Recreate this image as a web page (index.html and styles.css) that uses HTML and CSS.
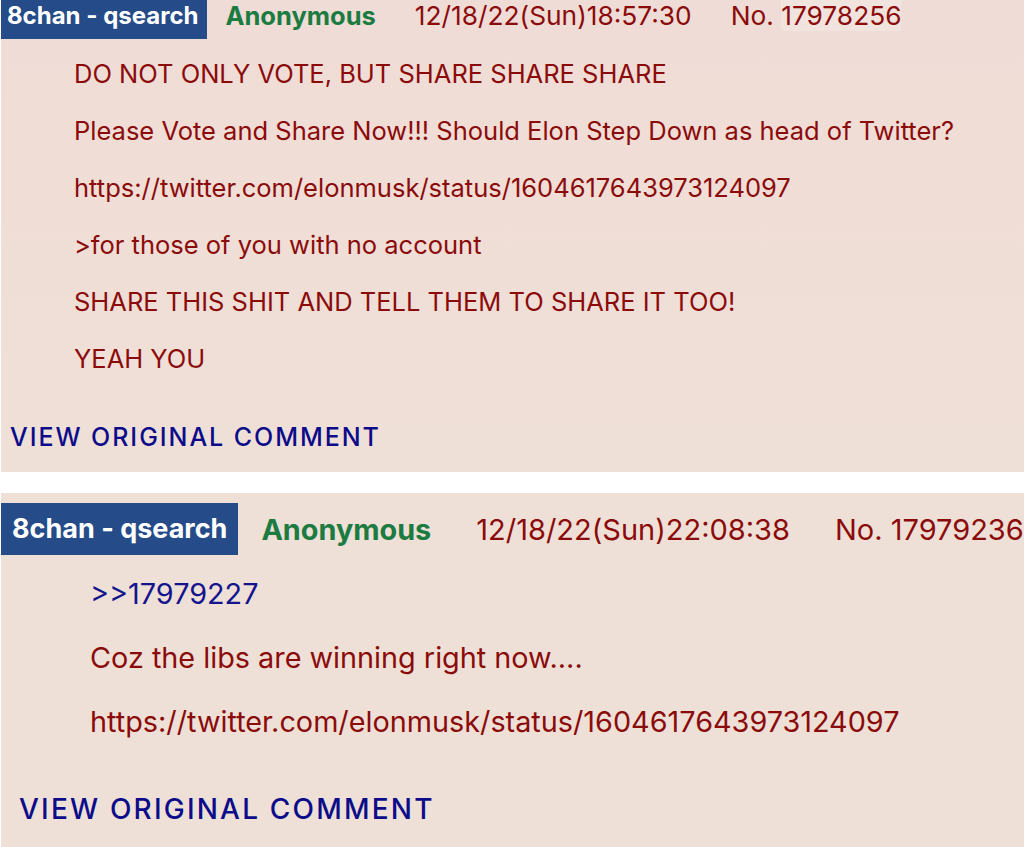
FILE: index.html
```html
<!DOCTYPE html>
<html lang="en">
<head>
<meta charset="utf-8">
<title>8chan - qsearch</title>
<link rel="stylesheet" href="styles.css">
</head>
<body>
<div class="post post-a">
  <div class="post-head">
    <span class="badge">8chan - qsearch</span>
    <span class="name">Anonymous</span>
    <span class="date">12/18/22(Sun)18:57:30</span>
    <span class="num">No. <span class="num-id">17978256</span></span>
  </div>
  <div class="post-body">
    <p>DO NOT ONLY VOTE, BUT SHARE SHARE SHARE</p>
    <p>Please Vote and Share Now!!! Should Elon Step Down as head of Twitter?</p>
    <p>https://twitter.com/elonmusk/status/1604617643973124097</p>
    <p>&gt;for those of you with no account</p>
    <p>SHARE THIS SHIT AND TELL THEM TO SHARE IT TOO!</p>
    <p>YEAH YOU</p>
  </div>
  <a class="view" href="#">VIEW ORIGINAL COMMENT</a>
</div>
<div class="post post-b">
  <div class="post-head">
    <span class="badge">8chan - qsearch</span>
    <span class="name">Anonymous</span>
    <span class="date">12/18/22(Sun)22:08:38</span>
    <span class="num">No. 17979236</span>
  </div>
  <div class="post-body">
    <p class="quote">&gt;&gt;17979227</p>
    <p>Coz the libs are winning right now....</p>
    <p>https://twitter.com/elonmusk/status/1604617643973124097</p>
  </div>
  <a class="view" href="#">VIEW ORIGINAL COMMENT</a>
</div>
</body>
</html>
```
FILE: styles.css
```css
html, body {
  margin: 0;
  padding: 0;
  background: #ffffff;
  overflow: hidden;
}
body {
  font-family: Inter, "Liberation Sans", sans-serif;
  color: #8b0b0b;
}
.post {
  margin-left: 1px;
  display: flex;
  flex-direction: column;
  overflow: hidden;
}
.post-a {
  height: 472px;
  background: linear-gradient(#f0dcd6, #efe0d7);
}
.post-b {
  margin-top: 21px;
  height: 354px;
  background: #eee0d6;
  padding-top: 10px;
  box-sizing: border-box;
}
.post-head {
  display: flex;
  white-space: nowrap;
}
.badge {
  background: #254c89;
  color: #ffffff;
  font-weight: 700;
  box-sizing: border-box;
}
.name {
  color: #1b7b41;
  font-weight: 700;
}
.post-body p {
  margin: 0;
  white-space: nowrap;
}
.quote {
  color: #13148e;
}
.view {
  color: #0c0c8a;
  text-decoration: none;
  font-weight: 500;
  white-space: nowrap;
}

/* first post */
.post-a .post-head { font-size: 26.3px; line-height: 32px; align-items: flex-start; }
.post-a .badge { height: 39px; padding: 0 9px 0 6px; font-size: 24px; }
.post-a .name { margin-left: 18px; font-size: 25.5px; }
.post-a .date { margin-left: 39px; }
.post-a .num { margin-left: 39px; }
.post-a .num-id { background: #f1e3dd; }
.post-a .post-body { padding-left: 73px; margin-top: 6px; font-size: 25.5px; }
.post-a .post-body p { line-height: 57px; }
.post-a .view { margin: 35px 0 0 9px; font-size: 25px; line-height: 30px; letter-spacing: 1.95px; }

/* second post */
.post-b .post-head { font-size: 29px; align-items: center; }
.post-b .badge { height: 52px; padding: 0 11px 2px 11px; font-size: 27px; display: flex; align-items: center; }
.post-b .name { margin-left: 23px; font-size: 28.8px; }
.post-b .date { margin-left: 45px; }
.post-b .num { margin-left: 45px; }
.post-b .post-body { padding-left: 89px; margin-top: 7px; font-size: 28.8px; }
.post-b .post-body p { line-height: 64px; }
.post-b .view { margin: 38px 0 0 18px; font-size: 28px; line-height: 34px; letter-spacing: 2.2px; }
```
